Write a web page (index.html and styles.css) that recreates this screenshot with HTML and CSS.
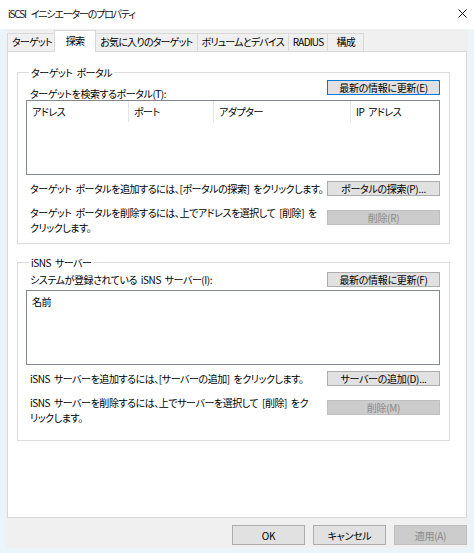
FILE: index.html
```html
<!DOCTYPE html>
<html lang="ja">
  <head>
    <meta charset="UTF-8" />
    <meta name="viewport" content="width=device-width, initial-scale=1.0" />
    <title>iSCSI イニシエーターのプロパティ</title>
    <link rel="stylesheet" href="styles.css">
  </head>
  <body>
    <div class="window">
      <div class="titlebar">
        <span class="title">iSCSI イニシエーターのプロパティ</span>
        <span class="close">
          <svg width="9" height="9" viewBox="0 0 9 9">
            <path d="M0.5 0.5 L8.5 8.5 M8.5 0.5 L0.5 8.5" stroke="#111" stroke-width="1" fill="none" />
          </svg>
        </span>
      </div>

      <div class="client">
        <div class="tabs">
          <div class="tab">ターゲット</div>
          <div class="tab active">探索</div>
          <div class="tab">お気に入りのターゲット</div>
          <div class="tab">ボリュームとデバイス</div>
          <div class="tab">RADIUS</div>
          <div class="tab">構成</div>
        </div>

        <div class="panel">
          <fieldset class="group group-portal">
            <legend>ターゲット ポータル</legend>
            <div class="row row-top">
              <span class="label label-portal">ターゲットを検索するポータル(T):</span>
              <button class="btn focused" type="button">最新の情報に更新(E)</button>
            </div>
            <div class="listbox list-portal">
              <div class="list-head">
                <div class="col col-addr">アドレス</div>
                <div class="col col-port">ポート</div>
                <div class="col col-adapter">アダプター</div>
                <div class="col col-ip">IP アドレス</div>
              </div>
            </div>
            <div class="row row-mid">
              <span class="label">ターゲット ポータルを追加するには、[ポータルの探索] をクリックします。</span>
              <button class="btn" type="button">ポータルの探索(P)...</button>
            </div>
            <div class="row row-del">
              <span class="label label-multi">ターゲット ポータルを削除するには、上でアドレスを選択して [削除] を<br />クリックします。</span>
              <button class="btn" type="button" disabled>削除(R)</button>
            </div>
          </fieldset>

          <fieldset class="group group-isns">
            <legend>iSNS サーバー</legend>
            <div class="row row-top-isns">
              <span class="label">システムが登録されている iSNS サーバー(I):</span>
              <button class="btn" type="button">最新の情報に更新(F)</button>
            </div>
            <div class="listbox list-isns">
              <div class="list-head">
                <div class="col col-name">名前</div>
              </div>
            </div>
            <div class="row row-mid">
              <span class="label">iSNS サーバーを追加するには、[サーバーの追加] をクリックします。</span>
              <button class="btn" type="button">サーバーの追加(D)...</button>
            </div>
            <div class="row row-del">
              <span class="label label-multi">iSNS サーバーを削除するには、上でサーバーを選択して [削除] をク<br />リックします。</span>
              <button class="btn" type="button" disabled>削除(M)</button>
            </div>
          </fieldset>
        </div>

        <div class="footer">
          <button class="btn btn-footer" type="button">OK</button>
          <button class="btn btn-footer" type="button">キャンセル</button>
          <button class="btn btn-footer" type="button" disabled>適用(A)</button>
        </div>
      </div>
    </div>
  </body>
</html>
```

FILE: styles.css
```css
* {
  margin: 0;
  padding: 0;
  box-sizing: border-box;
}

body {
  font-family: "Noto Sans CJK JP", "Noto Sans", sans-serif;
  font-size: 10px;
  letter-spacing: -0.45px;
  word-spacing: 2px;
  font-feature-settings: "palt";
  color: #000;
  background-color: #eaf5fb;
}

.window {
  width: 474px;
  height: 553px;
  display: flex;
  flex-direction: column;
  background-color: #eaf5fb;
}

.titlebar {
  height: 29px;
  background-color: #fff;
  display: flex;
  align-items: center;
  justify-content: space-between;
  padding: 0 7px 2px 8px;
}

.title {
  font-size: 10px;
  letter-spacing: -1.2px;
  word-spacing: 4px;
  line-height: 13px;
  color: #111;
}

.close {
  display: flex;
  align-items: center;
}

.client {
  flex: 1;
  margin: 0 6px 5px 6px;
  padding: 1px 1px 0 1px;
  background-color: #f0f0f0;
  display: flex;
  flex-direction: column;
}

/* tab strip */
.tabs {
  display: flex;
  align-items: flex-end;
  height: 21px;
}

.tab {
  min-width: 37px;
  height: 18px;
  line-height: 16px;
  padding: 0 4px;
  text-align: center;
  letter-spacing: -0.8px;
  border: 1px solid #d9d9d9;
  border-bottom: none;
  margin-right: -1px;
  background-color: #f0f0f0;
  white-space: nowrap;
}

.tab.active {
  height: 22px;
  line-height: 19px;
  padding: 0 11px;
  margin: 0 -1px -1px -2px;
  background-color: #fff;
  position: relative;
  z-index: 1;
}

.panel {
  height: 467px;
  background-color: #fff;
  border: 1px solid #d9d9d9;
  padding: 14px 16px 0 9px;
}

/* group boxes */
.group {
  min-width: 0;
  border: 1px solid #dcdcdc;
  padding: 1px 9px 8px 8px;
}

.group legend {
  margin-left: 3px;
  padding: 0 2px;
  line-height: 13px;
}

.group-isns {
  margin-top: 12px;
  padding-bottom: 15px;
}

.row {
  display: flex;
  justify-content: space-between;
  white-space: nowrap;
}

.label {
  padding-left: 4px;
  line-height: 12px;
}

.label-multi {
  line-height: 14.5px;
}

.row-top {
  align-items: flex-end;
}

.label-portal {
  margin-bottom: -5px;
}

.row-top-isns {
  align-items: center;
  margin-top: 2px;
}

.row-mid {
  align-items: center;
  margin-top: 6px;
}

.row-del {
  align-items: flex-start;
  margin-top: 10px;
}

.row-del .btn {
  margin-top: 4px;
}

/* buttons */
.btn {
  flex: none;
  width: 113px;
  height: 15px;
  font-family: inherit;
  font-size: 10px;
  letter-spacing: -0.3px;
  font-feature-settings: "palt";
  line-height: 13px;
  color: #000;
  background-color: #e1e1e1;
  border: 1px solid #adadad;
}

.btn.focused {
  border-color: #0078d7;
}

.btn:disabled {
  color: #8a8a8a;
  background-color: #cccccc;
  border-color: #bfbfbf;
}

/* list views */
.listbox {
  border: 1px solid #828790;
  background-color: #fff;
  margin-top: 5px;
}

.list-portal {
  height: 75px;
}

.list-isns {
  height: 75px;
  margin-top: 3px;
}

.list-head {
  display: flex;
  height: 21px;
  align-items: center;
}

.col {
  height: 100%;
  line-height: 21px;
  padding-left: 5px;
  border-right: 1px solid #e5e5e5;
}

.col-addr {
  width: 102px;
}

.col-port {
  width: 85px;
}

.col-adapter {
  width: 137px;
}

.col-ip {
  flex: 1;
  border-right: none;
}

.col-name {
  border-right: none;
}

/* footer */
.footer {
  display: flex;
  justify-content: flex-end;
  gap: 8px;
  padding: 7px 0 0 0;
}

.btn-footer {
  width: 73px;
  height: 20px;
}
```
